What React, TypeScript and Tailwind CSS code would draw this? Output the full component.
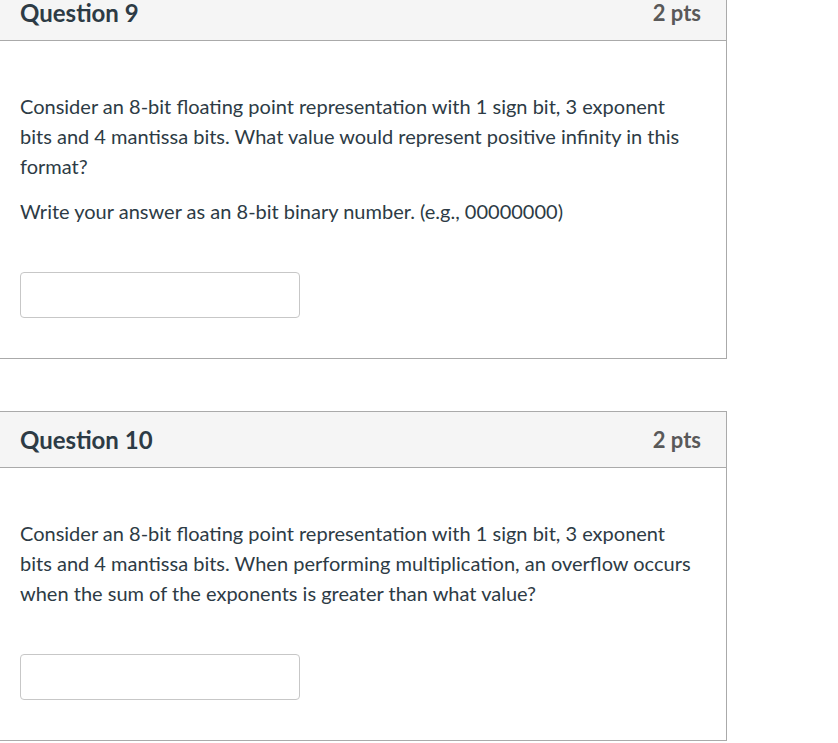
type QuestionProps = {
  number: number;
  points: number;
  paragraphs: string[];
  className?: string;
};

const QuestionCard = ({ number, points, paragraphs, className = '' }: QuestionProps) => {
  return (
    <div className={`ml-[-1px] w-[728px] border border-[#aaaaaa] bg-white ${className}`}>
      <div className="flex h-[56px] items-center justify-between border-b border-[#aaaaaa] bg-[#f5f5f5] pl-[20px] pr-[25px]">
        <h2 className="text-[24px] font-bold text-[#2d3b45]">Question {number}</h2>
        <span className="text-[22px] font-bold text-[#595959]">{points} pts</span>
      </div>
      <div className="pb-[40px] pl-[20px] pr-[20px] pt-[50px]">
        <div className="w-[676px] text-[20px] leading-[30px] text-[#2d3b45]">
          {paragraphs.map((p, i) => (
            <p key={i} className={i > 0 ? 'mt-[15px]' : ''}>
              {p}
            </p>
          ))}
        </div>
        <input
          type="text"
          aria-label={`Answer for question ${number}`}
          className="mt-[46px] block h-[46px] w-[280px] rounded-[4px] border border-[#c7c7c7] bg-white px-3 text-[20px] outline-none"
        />
      </div>
    </div>
  );
};

export default function App() {
  return (
    <div
      className="min-h-screen overflow-hidden bg-white"
      style={{ fontFamily: 'Lato, "Liberation Sans", sans-serif' }}
    >
      <QuestionCard
        className="mt-[-16px]"
        number={9}
        points={2}
        paragraphs={[
          'Consider an 8-bit floating point representation with 1 sign bit, 3 exponent bits and 4 mantissa bits. What value would represent positive infinity in this format?',
          'Write your answer as an 8-bit binary number. (e.g., 00000000)'
        ]}
      />
      <QuestionCard
        className="mt-[52px]"
        number={10}
        points={2}
        paragraphs={[
          'Consider an 8-bit floating point representation with 1 sign bit, 3 exponent bits and 4 mantissa bits. When performing multiplication, an overflow occurs when the sum of the exponents is greater than what value?'
        ]}
      />
    </div>
  );
}
